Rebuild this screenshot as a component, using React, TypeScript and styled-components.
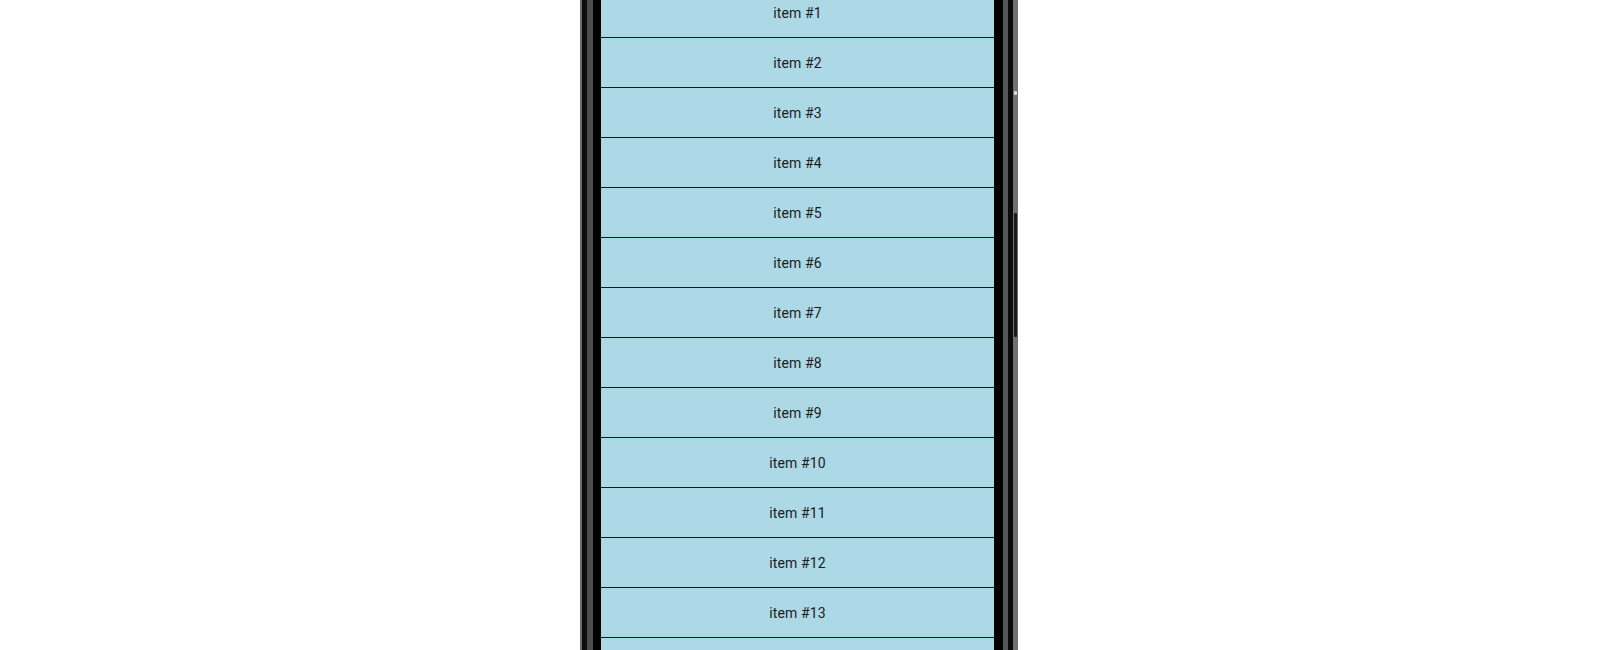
import React from "react";
import styled, { createGlobalStyle } from "styled-components";

const GlobalStyle = createGlobalStyle`
  html, body {
    margin: 0;
    padding: 0;
    background: #ffffff;
    overflow: hidden;
  }
  body {
    font-family: Roboto, "Noto Sans", Arial, sans-serif;
  }
`;

const Page = styled.div`
  width: 1600px;
  height: 650px;
  display: flex;
  justify-content: center;
  padding-right: 2px;
  box-sizing: border-box;
  overflow: hidden;
`;

/* Phone body: nested bands of the bezel, each its own side widths */
const Bezel = styled.div<{ $l: number; $r: number; $lc: string; $rc: string }>`
  display: flex;
  border-left: ${(p) => p.$l}px solid ${(p) => p.$lc};
  border-right: ${(p) => p.$r}px solid ${(p) => p.$rc};
  position: relative;
`;

const SideButton = styled.div<{ $top: number; $h: number; $c: string }>`
  position: absolute;
  right: -4px;
  top: ${(p) => p.$top}px;
  width: 3px;
  height: ${(p) => p.$h}px;
  background: ${(p) => p.$c};
  border-radius: 1px;
`;

const Screen = styled.div`
  width: 393px;
  height: 650px;
  overflow: hidden;
  background: #add8e6;
`;

const List = styled.ul`
  list-style: none;
  margin: 0;
  padding: 0;
  transform: translateY(-12px);
`;

const Row = styled.li`
  height: 49px;
  border-bottom: 1px solid #0f1a1c;
  background: #add8e6;
  display: flex;
  align-items: center;
  justify-content: center;
  font-size: 14px;
  color: #1c1c1c;
  letter-spacing: 0.1px;
`;

const items = Array.from({ length: 16 }, (_, i) => `item #${i + 1}`);

export default function App() {
  return (
    <>
      <GlobalStyle />
      <Page>
        <Bezel $l={2} $r={5} $lc="#6b6b6b" $rc="#707070">
          <SideButton $top={91} $h={4} $c="#d8d8d8" />
          <SideButton $top={213} $h={124} $c="#1a1a1a" />
          <Bezel $l={5} $r={5} $lc="#0d0d0d" $rc="#0b0b0b">
            <Bezel $l={6} $r={5} $lc="#4d4d4d" $rc="#555555">
              <Bezel $l={8} $r={9} $lc="#000000" $rc="#000000">
                <Screen>
                  <List>
                    {items.map((t) => (
                      <Row key={t}>{t}</Row>
                    ))}
                  </List>
                </Screen>
              </Bezel>
            </Bezel>
          </Bezel>
        </Bezel>
      </Page>
    </>
  );
}
